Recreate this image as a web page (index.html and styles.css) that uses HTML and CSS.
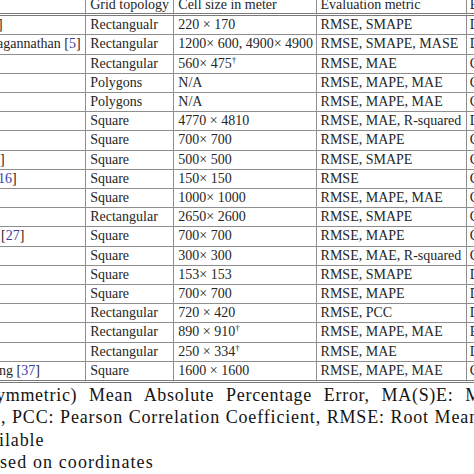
FILE: index.html
```html
<!DOCTYPE html>
<html>
<head>
<meta charset="utf-8">
<link rel="stylesheet" href="styles.css">
</head>
<body>
<div class="page">
<table class="tbl">
  <thead>
    <tr>
      <th class="c1"></th>
      <th class="c2">Grid topology</th>
      <th class="c3">Cell size in meter</th>
      <th class="c4">Evaluation metric</th>
      <th class="c5">E</th>
    </tr>
  </thead>
  <tbody>
    <tr><td class="c1"><span class="frag cut-a">]</span></td><td class="c2">Rectangualr</td><td class="c3">220 × 170</td><td class="c4">RMSE, SMAPE</td><td class="c5">D</td></tr>
    <tr><td class="c1"><span class="frag cut-b">agannathan [<span class="ref">5</span>]</span></td><td class="c2">Rectangular</td><td class="c3">1200× 600, 4900× 4900</td><td class="c4">RMSE, SMAPE, MASE</td><td class="c5">D</td></tr>
    <tr><td class="c1"></td><td class="c2">Rectangular</td><td class="c3">560× 475<sup class="dg">†</sup></td><td class="c4">RMSE, MAE</td><td class="c5">C</td></tr>
    <tr><td class="c1"></td><td class="c2">Polygons</td><td class="c3">N/A</td><td class="c4">RMSE, MAPE, MAE</td><td class="c5">C</td></tr>
    <tr><td class="c1"></td><td class="c2">Polygons</td><td class="c3">N/A</td><td class="c4">RMSE, MAPE, MAE</td><td class="c5">C</td></tr>
    <tr><td class="c1"></td><td class="c2">Square</td><td class="c3">4770 × 4810</td><td class="c4">RMSE, MAE, R-squared</td><td class="c5">D</td></tr>
    <tr><td class="c1"></td><td class="c2">Square</td><td class="c3">700× 700</td><td class="c4">RMSE, MAPE</td><td class="c5">C</td></tr>
    <tr><td class="c1"><span class="frag cut-c">]</span></td><td class="c2">Square</td><td class="c3">500× 500</td><td class="c4">RMSE, SMAPE</td><td class="c5">C</td></tr>
    <tr><td class="c1"><span class="frag cut-d"><span class="ref">16</span>]</span></td><td class="c2">Square</td><td class="c3">150× 150</td><td class="c4">RMSE</td><td class="c5">C</td></tr>
    <tr><td class="c1"></td><td class="c2">Square</td><td class="c3">1000× 1000</td><td class="c4">RMSE, MAPE, MAE</td><td class="c5">C</td></tr>
    <tr><td class="c1"></td><td class="c2">Rectangular</td><td class="c3">2650× 2600</td><td class="c4">RMSE, SMAPE</td><td class="c5">C</td></tr>
    <tr><td class="c1"><span class="frag cut-e">[<span class="ref">27</span>]</span></td><td class="c2">Square</td><td class="c3">700× 700</td><td class="c4">RMSE, MAPE</td><td class="c5">C</td></tr>
    <tr><td class="c1"></td><td class="c2">Square</td><td class="c3">300× 300</td><td class="c4">RMSE, MAE, R-squared</td><td class="c5">C</td></tr>
    <tr><td class="c1"></td><td class="c2">Square</td><td class="c3">153× 153</td><td class="c4">RMSE, SMAPE</td><td class="c5">D</td></tr>
    <tr><td class="c1"></td><td class="c2">Square</td><td class="c3">700× 700</td><td class="c4">RMSE, MAPE</td><td class="c5">D</td></tr>
    <tr><td class="c1"></td><td class="c2">Rectangular</td><td class="c3">720 × 420</td><td class="c4">RMSE, PCC</td><td class="c5">D</td></tr>
    <tr><td class="c1"></td><td class="c2">Rectangular</td><td class="c3">890 × 910<sup class="dg">†</sup></td><td class="c4">RMSE, MAPE, MAE</td><td class="c5">E</td></tr>
    <tr><td class="c1"></td><td class="c2">Rectangular</td><td class="c3">250 × 334<sup class="dg">†</sup></td><td class="c4">RMSE, MAE</td><td class="c5">D</td></tr>
    <tr class="last"><td class="c1"><span class="frag cut-f">ng [<span class="ref">37</span>]</span></td><td class="c2">Square</td><td class="c3">1600 × 1600</td><td class="c4">RMSE, MAPE, MAE</td><td class="c5">C</td></tr>
  </tbody>
</table>
<div class="notes">
  <div class="line l1">ymmetric) Mean Absolute Percentage Error, MA(S)E: M</div>
  <div class="line l2">, PCC: Pearson Correlation Coefficient, RMSE: Root Mean</div>
  <div class="line l3">ilable</div>
  <div class="line l4">sed on coordinates</div>
</div>
</div>
</body>
</html>
```
FILE: styles.css
```css
html, body {
  margin: 0;
  padding: 0;
  background: #ffffff;
}
body {
  width: 474px;
  height: 474px;
  overflow: hidden;
}
.page {
  width: 474px;
  overflow: hidden;
}
.tbl {
  border-collapse: separate;
  border-spacing: 0;
  margin-top: -5px;
  width: 540px;
  table-layout: fixed;
  font-family: "Liberation Serif", "Times New Roman", serif;
  font-size: 14px;
  color: #262626;
}
.tbl th, .tbl td {
  font-weight: normal;
  text-align: left;
  white-space: nowrap;
  overflow: hidden;
  line-height: 18.2px;
  height: 18.2px;
  padding: 0 0 0 4px;
  border-bottom: 1px solid #8e8e8e;
  border-left: 1px solid #8e8e8e;
  vertical-align: top;
}
.tbl thead th {
  border-bottom: 3px double #7a7a7a;
  padding-top: 1px;
  line-height: 17.2px;
  height: 17.2px;
}
.tbl tr.last td {
  border-bottom: 3px double #7a7a7a;
}
.tbl .c1 {
  width: 85px;
  padding: 0;
  border-left: none;
}
.tbl .c2 { width: 83px; }
.tbl .c3 { width: 137px; }
.tbl .c4 { width: 145px; }
.tbl .c5 { width: 70px; padding-left: 3px; }

.frag { display: inline-block; }
.cut-a { margin-left: -2px; }
.cut-b { margin-left: -3px; }
.cut-c { margin-left: 0px; }
.cut-d { margin-left: -2px; }
.cut-e { margin-left: 1px; }
.cut-f { margin-left: -1px; }

.ref { color: #3b3ba6; }
.dg {
  font-size: 9px;
  line-height: 0;
  vertical-align: 5px;
}

.notes {
  margin-top: 1px;
  font-family: "Liberation Serif", "Times New Roman", serif;
  font-size: 18px;
  line-height: 22.3px;
  letter-spacing: 0.7px;
  color: #141414;
}
.line {
  white-space: nowrap;
}
.l1 { word-spacing: 6.6px; margin-left: -4px; }
.l2 { word-spacing: 0.3px; letter-spacing: 0.85px; margin-left: 1px; }
.l3 { margin-left: -1px; letter-spacing: 0.9px; }
.l4 { margin-left: 0; letter-spacing: 1.1px; }
```
